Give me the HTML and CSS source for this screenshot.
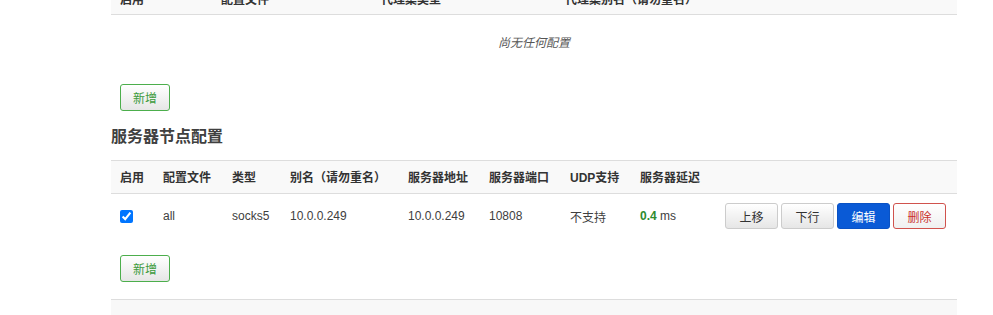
FILE: index.html
```html
<!DOCTYPE html>
<html lang="zh-CN">
<head>
  <meta charset="UTF-8" />
  <title>服务器节点配置</title>
  <link rel="stylesheet" href="styles.css">
</head>
<body>

  <div class="page">

    <table class="cfg-table">
      <thead>
        <tr>
          <th class="c-top-en">启用</th>
          <th class="c-top-file">配置文件</th>
          <th class="c-top-type">代理集类型</th>
          <th>代理集别名（请勿重名）</th>
        </tr>
      </thead>
      <tbody>
        <tr class="empty-row">
          <td colspan="4">尚无任何配置</td>
        </tr>
      </tbody>
    </table>
    <div class="add-bar">
      <button class="btn btn-add">新增</button>
    </div>

    <h3 class="section-title">服务器节点配置</h3>

    <table class="cfg-table">
      <thead>
        <tr>
          <th class="c-en">启用</th>
          <th class="c-file">配置文件</th>
          <th class="c-type">类型</th>
          <th class="c-name">别名（请勿重名）</th>
          <th class="c-addr">服务器地址</th>
          <th class="c-port">服务器端口</th>
          <th class="c-udp">UDP支持</th>
          <th class="c-delay">服务器延迟</th>
          <th></th>
        </tr>
      </thead>
      <tbody>
        <tr class="data-row">
          <td><input type="checkbox" checked /></td>
          <td>all</td>
          <td>socks5</td>
          <td>10.0.0.249</td>
          <td>10.0.0.249</td>
          <td>10808</td>
          <td>不支持</td>
          <td><span class="delay">0.4</span> ms</td>
          <td>
            <div class="ops">
              <button class="btn btn-op">上移</button>
              <button class="btn btn-op">下行</button>
              <button class="btn btn-edit">编辑</button>
              <button class="btn btn-del">删除</button>
            </div>
          </td>
        </tr>
      </tbody>
    </table>
    <div class="add-bar last">
      <button class="btn btn-add">新增</button>
    </div>

    <div class="next-section"></div>
  </div>

</body>
</html>
```

FILE: styles.css
```css
* { margin: 0; padding: 0; box-sizing: border-box; }
body {
  background: #fff; color: #333;
  font-family: "Liberation Sans", "Noto Sans CJK SC", sans-serif; font-size: 12px;
}

.page { width: 846px; margin: -19px 0 0 111px; }

.cfg-table { width: 100%; border-collapse: collapse; table-layout: fixed; }
.cfg-table th {
  height: 33px; background: #f9f9f9; border-top: 1px solid #ddd; border-bottom: 1px solid #ddd;
  text-align: left; font-weight: bold; color: #333; padding: 0 0 0 9px; white-space: nowrap;
}
.cfg-table td { padding: 0 0 0 9px; color: #404040; white-space: nowrap; }

.c-top-en { width: 101px; }
.c-top-file { width: 160px; }
.c-top-type { width: 184px; }

.c-en { width: 43px; }
.c-file { width: 69px; }
.c-type { width: 58px; }
.c-name { width: 118px; }
.c-addr { width: 81px; }
.c-port { width: 81px; }
.c-udp { width: 70px; }
.c-delay { width: 85px; }

.empty-row td {
  height: 53px; text-align: center; font-style: italic; color: #555; padding: 0;
}

.data-row td { height: 46px; }
.data-row input { width: 13px; height: 13px; margin: 3px 0 0 0; accent-color: #0075ff; }
.delay { color: #2e8b2e; font-weight: bold; }

.ops { display: flex; justify-content: flex-end; gap: 3px; padding-right: 11px; }

.btn {
  height: 26px; width: 53px; border-radius: 3px; font-size: 12px; cursor: pointer;
  font-family: "Liberation Sans", "Noto Sans CJK SC", sans-serif;
  border: 1px solid #ccc; background: linear-gradient(#fff, #e6e6e6); color: #333;
}
.btn-edit { background: #0a5ad6; border-color: #0a52c4; color: #fff; }
.btn-del { border-color: #d0524d; color: #c9302c; background: linear-gradient(#fff, #f0f0f0); }

.add-bar { padding: 16px 9px 13px; }
.add-bar.last { padding-bottom: 17px; }
.btn-add { width: 50px; height: 27px; border-color: #4cae4c; color: #3c9a3c; }

.section-title { font-size: 16px; line-height: 26px; font-weight: bold; color: #404040; margin-bottom: 10px; }

.next-section { border-top: 1px solid #ddd; background: #f8f8f8; height: 16px; }
```
